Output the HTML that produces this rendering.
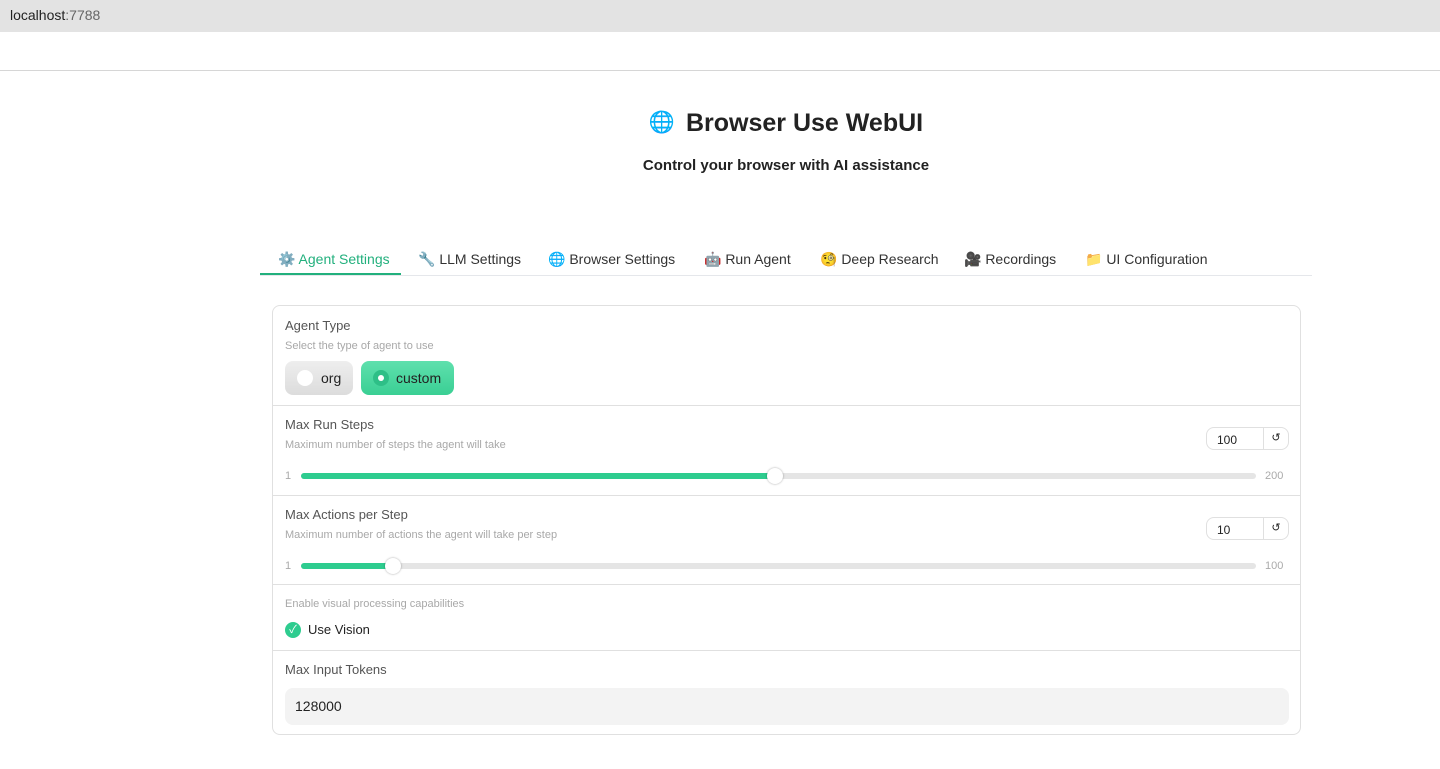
<!DOCTYPE html>
<html><head><meta charset="utf-8"><style>
*{box-sizing:border-box;margin:0;padding:0}
body{width:1440px;height:769px;background:#fff;font-family:"Liberation Sans","Noto Sans CJK SC",sans-serif;position:relative;overflow:hidden;color:#1f2937}
.bar{position:absolute;left:0;top:0;width:1440px;height:32px;background:#e3e3e3;font-size:14px;color:#222;padding:7px 10px}
.bar span{color:#666}
.line{position:absolute;left:0;top:70px;width:1440px;height:1px;background:#d6d6d6}
h1{position:absolute;top:109px;left:66px;width:1440px;text-align:center;font-size:25px;font-weight:bold;color:#222}
h1 .g{font-size:21px;vertical-align:2px;margin-right:4px}
.sub{position:absolute;top:157px;left:66px;width:1440px;text-align:center;font-size:15px;font-weight:bold;color:#222}
.tabs{position:absolute;top:240px;left:260px;width:1052px;height:36px;border-bottom:1px solid #e5e7eb}
.tab{position:absolute;top:11px;font-size:14px;color:#333;white-space:nowrap}
.tab.act{color:#22b07d}
.uline{position:absolute;left:260px;top:273px;width:141px;height:2px;background:#22b07d}
.card{position:absolute;left:272px;top:305px;width:1029px;height:430px;border:1px solid #e0e0e0;border-radius:8px}
.sec{position:absolute;left:0;width:1027px;border-top:1px solid #e0e0e0}
.lbl{position:absolute;left:12px;font-size:13px;color:#555}
.info{position:absolute;left:12px;font-size:11px;color:#a8a8a8}
.track{position:absolute;left:28px;width:955px;height:6px;border-radius:3px;background:#e5e5e5}
.fill{position:absolute;left:0;top:0;height:6px;border-radius:3px;background:#2ecc8f}
.knob{position:absolute;top:-5px;width:16px;height:16px;border-radius:50%;background:#fff;box-shadow:0 0 2px rgba(0,0,0,.35)}
.num{position:absolute;left:933px;width:83px;height:23px;border:1px solid #e0e0e0;border-radius:8px;font-size:12px;color:#222}
.num .v{position:absolute;left:10px;top:5px}
.num .r{position:absolute;right:0;top:0;width:25px;height:21px;border-left:1px solid #e0e0e0;background:#fff;border-radius:0 8px 8px 0;text-align:center;font-size:11px;line-height:21px}
.mn{position:absolute;left:12px;font-size:11px;color:#aaa}
.mx{position:absolute;left:992px;font-size:11px;color:#aaa}
</style></head><body>
<div class="bar">localhost<span>:7788</span></div>
<div class="line"></div>
<h1><span class="g">🌐</span> Browser Use WebUI</h1>
<div class="sub">Control your browser with AI assistance</div>
<div class="tabs">
<div class="tab act" style="left:18px">⚙️ Agent Settings</div>
<div class="tab" style="left:158px">🔧 LLM Settings</div>
<div class="tab" style="left:288px">🌐 Browser Settings</div>
<div class="tab" style="left:444px">🤖 Run Agent</div>
<div class="tab" style="left:560px">🧐 Deep Research</div>
<div class="tab" style="left:704px">🎥 Recordings</div>
<div class="tab" style="left:825px">📁 UI Configuration</div>
</div>
<div class="uline"></div>
<div class="card">
<div class="lbl" style="top:12px">Agent Type</div>
<div class="info" style="top:34px">Select the type of agent to use</div>
<div style="position:absolute;left:12px;top:55px;width:68px;height:34px;border-radius:8px;background:linear-gradient(#eee,#dcdcdc);font-size:14px;color:#222"><div style="position:absolute;left:12px;top:9px;width:16px;height:16px;border-radius:50%;background:#fff"></div><span style="position:absolute;left:36px;top:9px">org</span></div>
<div style="position:absolute;left:88px;top:55px;width:93px;height:34px;border-radius:8px;background:linear-gradient(#5fe0ad,#3acf94);font-size:14px;color:#222"><div style="position:absolute;left:12px;top:9px;width:16px;height:16px;border-radius:50%;background:#2ebf87;border:5px solid #2ebf87"><div style="width:6px;height:6px;border-radius:50%;background:#fff"></div></div><span style="position:absolute;left:35px;top:9px">custom</span></div>
<div class="sec" style="top:99px;height:90px">
<div class="lbl" style="top:11px">Max Run Steps</div>
<div class="info" style="top:33px">Maximum number of steps the agent will take</div>
<div class="num" style="top:21px"><span class="v">100</span><span class="r">↺</span></div>
<div class="mn" style="top:64px">1</div>
<div class="track" style="top:67px"><div class="fill" style="width:476px"></div><div class="knob" style="left:466px"></div></div>
<div class="mx" style="top:64px">200</div>
</div>
<div class="sec" style="top:189px;height:89px">
<div class="lbl" style="top:11px">Max Actions per Step</div>
<div class="info" style="top:33px">Maximum number of actions the agent will take per step</div>
<div class="num" style="top:21px"><span class="v">10</span><span class="r">↺</span></div>
<div class="mn" style="top:64px">1</div>
<div class="track" style="top:67px"><div class="fill" style="width:95px"></div><div class="knob" style="left:84px"></div></div>
<div class="mx" style="top:64px">100</div>
</div>
<div class="sec" style="top:278px;height:66px">
<div class="info" style="top:13px">Enable visual processing capabilities</div>
<div style="position:absolute;left:12px;top:37px;width:16px;height:16px;border-radius:50%;background:#2ecc8f;color:#fff;font-size:11px;text-align:center;line-height:16px">✓</div>
<div style="position:absolute;left:35px;top:37px;font-size:13px;color:#222">Use Vision</div>
</div>
<div class="sec" style="top:344px;height:85px">
<div class="lbl" style="top:11px">Max Input Tokens</div>
<div style="position:absolute;left:12px;top:37px;width:1004px;height:37px;border-radius:8px;background:#f3f3f3;font-size:14px;color:#222;padding:10px 10px">128000</div>
</div>
</div>
</body></html>
